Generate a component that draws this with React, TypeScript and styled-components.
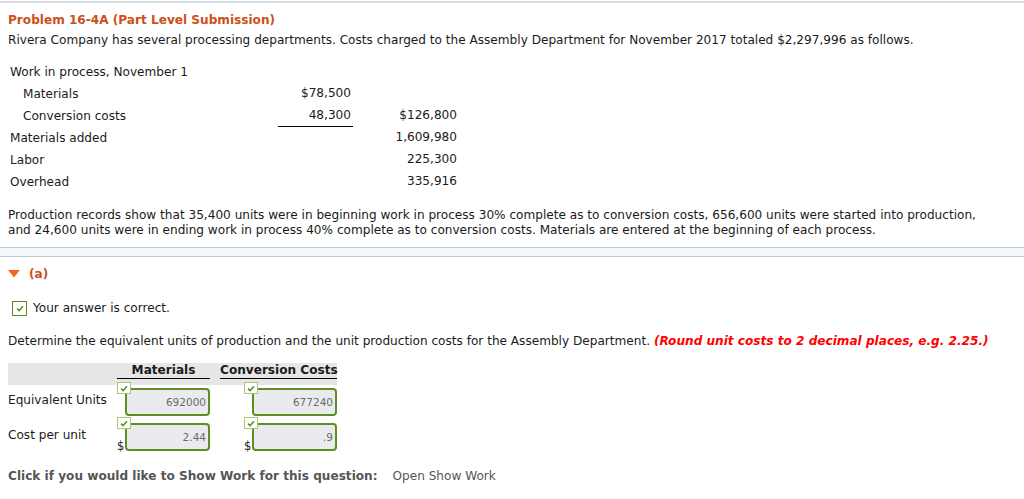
import React from "react";
import styled, { createGlobalStyle } from "styled-components";

const GlobalStyle = createGlobalStyle`
    body {
        margin: 0;
        background: #ffffff;
        font-family: "DejaVu Sans", Verdana, sans-serif;
        font-size: 12.1px;
        color: #1a1a1a;
    }
`;

type CostRow = {
    label: string;
    indent?: boolean;
    sub?: string;
    total?: string;
    underline?: boolean;
};

const costRows: CostRow[] = [
    { label: "Work in process, November 1" },
    { label: "Materials", indent: true, sub: "$78,500" },
    {
        label: "Conversion costs",
        indent: true,
        sub: "48,300",
        total: "$126,800",
        underline: true,
    },
    { label: "Materials added", total: "1,609,980" },
    { label: "Labor", total: "225,300" },
    { label: "Overhead", total: "335,916" },
];

const CheckMark: React.FC = () => (
    <svg width="8" height="7" viewBox="0 0 8 7">
        <path
            d="M1 3.6 L3.1 5.6 L7 1.2"
            fill="none"
            stroke="#4f9a1a"
            strokeWidth="1.5"
        />
    </svg>
);

const AnswerInput: React.FC<{ value: string; dollar?: boolean }> = ({
    value,
    dollar,
}) => (
    <InputCell>
        <InputWrap>
            <SmallCheck>
                <CheckMark />
            </SmallCheck>
            {dollar ? <Dollar>$</Dollar> : null}
            <ValueBox>{value}</ValueBox>
        </InputWrap>
    </InputCell>
);

export default function App() {
    return (
        <Page>
            <GlobalStyle />
            <Header>
                <Title>Problem 16-4A (Part Level Submission)</Title>
                <Line>
                    Rivera Company has several processing departments. Costs
                    charged to the Assembly Department for November 2017
                    totaled $2,297,996 as follows.
                </Line>
                <CostTable>
                    {costRows.map((row) => (
                        <React.Fragment key={row.label}>
                            <CostLabel $indent={row.indent}>{row.label}</CostLabel>
                            <CostValue $underline={row.underline}>
                                {row.sub}
                            </CostValue>
                            <CostValue>{row.total}</CostValue>
                        </React.Fragment>
                    ))}
                </CostTable>
                <Paragraph>
                    <ParaLine>
                        Production records show that 35,400 units were in
                        beginning work in process 30% complete as to
                        conversion costs, 656,600 units were started into
                        production,
                    </ParaLine>
                    <ParaLine>
                        and 24,600 units were in ending work in process 40%
                        complete as to conversion costs. Materials are entered
                        at the beginning of each process.
                    </ParaLine>
                </Paragraph>
            </Header>
            <Separator />
            <Part>
                <PartTitle>
                    <svg width="12" height="8" viewBox="0 0 12 8">
                        <path d="M0 0 H12 L6 7.5 Z" fill="#f26b1d" />
                    </svg>
                    <span>(a)</span>
                </PartTitle>
                <CorrectRow>
                    <CorrectBox>
                        <CheckMark />
                    </CorrectBox>
                    Your answer is correct.
                </CorrectRow>
                <Line>
                    Determine the equivalent units of production and the unit
                    production costs for the Assembly Department.{" "}
                    <Hint>(Round unit costs to 2 decimal places, e.g. 2.25.)</Hint>
                </Line>
                <AnswerTable>
                    <HeadBand>
                        <span />
                        <HeadCell>Materials</HeadCell>
                        <HeadCell $wide>Conversion Costs</HeadCell>
                    </HeadBand>
                    <AnswerRow $first>
                        <RowLabel>Equivalent Units</RowLabel>
                        <AnswerInput value="692000" />
                        <AnswerInput value="677240" />
                    </AnswerRow>
                    <AnswerRow>
                        <RowLabel>Cost per unit</RowLabel>
                        <AnswerInput value="2.44" dollar />
                        <AnswerInput value=".9" dollar />
                    </AnswerRow>
                </AnswerTable>
                <ShowWork>
                    <strong>Click if you would like to Show Work for this question:</strong>
                    <ShowLink>Open Show Work</ShowLink>
                </ShowWork>
            </Part>
        </Page>
    );
}

const Page = styled.div`
    margin-top: 1px;
    border-top: 2px solid #d9dee4;
    width: 1024px;
    height: 496px;
    overflow: hidden;
`;

const Header = styled.div`
    padding: 7px 8px 0;
`;

const Title = styled.div`
    font-weight: 700;
    line-height: 20px;
    color: #cc4f1b;
`;

const Line = styled.div`
    line-height: 20px;
    white-space: nowrap;
`;

const CostTable = styled.div`
    display: grid;
    grid-template-columns: 268px 75px 106px;
    grid-auto-rows: 22px;
    margin: 11px 0 0 2px;
`;

const CostLabel = styled.div<{ $indent?: boolean }>`
    line-height: 22px;
    padding-left: ${({ $indent }) => ($indent ? "13px" : "0")};
`;

const CostValue = styled.div<{ $underline?: boolean }>`
    line-height: 20px;
    text-align: right;
    padding-right: 2px;
    border-bottom: 1px solid
        ${({ $underline }) => ($underline ? "#000000" : "transparent")};
`;

const Paragraph = styled.div`
    margin-top: 15px;
    line-height: 15px;
`;

const ParaLine = styled.div`
    white-space: nowrap;
`;

const Separator = styled.div`
    margin-top: 9px;
    height: 8px;
    background: #f4f7fa;
    border-top: 1px solid #c6ccd6;
    border-bottom: 1px solid #c6ccd6;
`;

const Part = styled.div`
    padding: 7px 8px 0;
`;

const PartTitle = styled.div`
    display: flex;
    align-items: center;
    gap: 9px;
    height: 20px;
    font-weight: 700;
    color: #cc4f1b;
`;

const CorrectRow = styled.div`
    display: flex;
    align-items: center;
    gap: 6px;
    height: 20px;
    margin: 14px 0 13px 4px;
`;

const CorrectBox = styled.span`
    display: inline-flex;
    align-items: center;
    justify-content: center;
    width: 13px;
    height: 13px;
    border: 1px solid #5b8c1f;
    background: #ffffff;
`;

const Hint = styled.span`
    color: #ff0000;
    font-weight: 700;
    font-style: italic;
`;

const AnswerTable = styled.div`
    margin-top: 12px;
    width: 329px;
`;

const HeadBand = styled.div`
    display: grid;
    grid-template-columns: 109px 93px 127px;
    height: 22px;
    background: #e6e6e6;
`;

const HeadCell = styled.div<{ $wide?: boolean }>`
    margin-left: ${({ $wide }) => ($wide ? "10px" : "0")};
    height: 15px;
    line-height: 15px;
    border-bottom: 1px solid #000000;
    text-align: center;
    font-weight: 700;
    white-space: nowrap;
`;

const AnswerRow = styled.div<{ $first?: boolean }>`
    display: grid;
    grid-template-columns: 109px 93px 127px;
    align-items: center;
    margin-top: ${({ $first }) => ($first ? "3px" : "7px")};
`;

const RowLabel = styled.div`
    line-height: 18px;
    margin-bottom: 4px;
    white-space: nowrap;
`;

const InputCell = styled.div`
    justify-self: end;
    width: 93px;
    display: flex;
    justify-content: flex-end;
`;

const InputWrap = styled.div`
    position: relative;
    width: 85px;
`;

const SmallCheck = styled.span`
    position: absolute;
    top: -6px;
    left: -8px;
    display: flex;
    align-items: center;
    justify-content: center;
    width: 12px;
    height: 10px;
    border: 1px solid #a7c77a;
    background: #ffffff;
`;

const Dollar = styled.span`
    position: absolute;
    left: -8px;
    bottom: -2px;
    font-size: 11.5px;
    color: #1a1a1a;
`;

const ValueBox = styled.div`
    box-sizing: border-box;
    height: 28px;
    border: 2px solid #5f8e22;
    border-radius: 4px;
    background: #e9ebee;
    color: #6b6b6b;
    font-size: 10.5px;
    line-height: 24px;
    text-align: right;
    padding-right: 2px;
`;

const ShowWork = styled.div`
    display: flex;
    gap: 15px;
    align-items: center;
    height: 20px;
    margin-top: 15px;
    color: #555555;
`;

const ShowLink = styled.span`
    color: #555555;
`;
